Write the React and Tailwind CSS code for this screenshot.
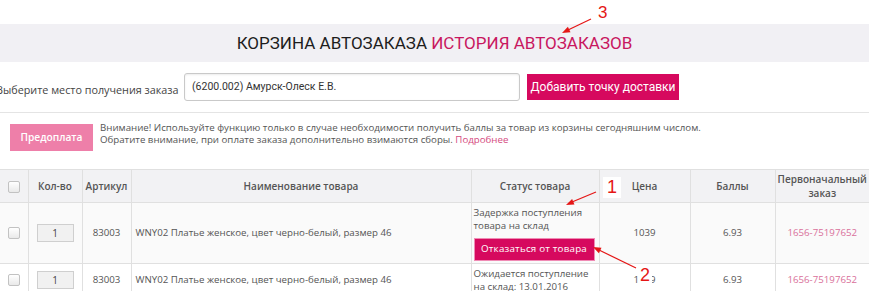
import React from 'react';

const narrow = { fontFamily: 'Roboto, "Liberation Sans", sans-serif' };

const Check = () => (
  <span className="inline-block w-[12px] h-[12px] rounded-[2px] border border-[#c2c2c2] bg-gradient-to-b from-white to-[#e9e9e9] align-middle" />
);

const Qty = () => (
  <div className="mx-auto w-[37px] h-[18px] border border-[#cfcfcf] bg-[#f1f1f1] text-center text-[10px] leading-[16px] text-[#444]">
    1
  </div>
);

const rows = [
  { status: ['Задержка поступления', 'товара на склад'], action: true },
  { status: ['Ожидается поступление', 'на склад: 13.01.2016'], action: false },
];

const App = () => {
  return (
    <div
      className="relative w-[869px] h-[291px] overflow-hidden bg-white text-[#555]"
      style={{ fontFamily: '"Open Sans", "DejaVu Sans", sans-serif' }}
    >
      <div className="h-[24px]" />
      <div className="h-[38px] bg-[#f1f0f4] flex items-center justify-center">
        <h1 className="text-[17px] leading-none text-[#1d1d1d] whitespace-nowrap" style={narrow}>
          КОРЗИНА АВТОЗАКАЗА <span className="text-[#c8175f]">ИСТОРИЯ АВТОЗАКАЗОВ</span>
        </h1>
      </div>

      <div className="h-[51px] flex items-center border-b border-[#e4e4e4]">
        <span className="-ml-[4px] mt-[7px] w-[184px] shrink-0 text-[10.8px] text-[#444] whitespace-nowrap">
          Выберите место получения заказа
        </span>
        <div
          className="ml-[4px] w-[336px] h-[28px] shrink-0 border border-[#c9c9c9] rounded-[3px] shadow-[inset_0_1px_2px_rgba(0,0,0,0.08)] flex items-center pl-[7px] text-[10.5px] text-[#333] whitespace-nowrap"
          style={narrow}
        >
          (6200.002) Амурск-Олеск Е.В.
        </div>
        <button
          className="ml-[7px] w-[152px] h-[26px] shrink-0 bg-[#d6095e] text-white text-[12px] whitespace-nowrap"
          style={narrow}
        >
          Добавить точку доставки
        </button>
      </div>

      <div className="h-[56px] flex items-start pl-[10px]">
        <button className="mt-[11px] w-[83px] h-[27px] shrink-0 bg-[#ee7fa9] text-white text-[10.2px] font-semibold">
          Предоплата
        </button>
        <div className="ml-[7px] mt-[9px] text-[9.7px] leading-[12px] text-[#555] whitespace-nowrap">
          <div>Внимание! Используйте функцию только в случае необходимости получить баллы за товар из корзины сегодняшним числом.</div>
          <div>
            Обратите внимание, при оплате заказа дополнительно взимаются сборы.{' '}
            <span className="text-[#d54a80]">Подробнее</span>
          </div>
        </div>
      </div>

      <table className="w-[869px] table-fixed border-collapse text-[9.7px]">
        <colgroup>
          <col className="w-[28px]" />
          <col className="w-[54px]" />
          <col className="w-[49px]" />
          <col className="w-[340px]" />
          <col className="w-[128px]" />
          <col className="w-[91px]" />
          <col className="w-[85px]" />
          <col className="w-[94px]" />
        </colgroup>
        <thead>
          <tr className="h-[33px] bg-[#f2f2f4] border-t border-b border-[#e0e0e0] text-[#555] text-[10px] leading-[14px]">
            <th className="border-r border-[#e0e0e0] font-semibold"><Check /></th>
            <th className="border-r border-[#e0e0e0] font-semibold">Кол-во</th>
            <th className="border-r border-[#e0e0e0] font-semibold">Артикул</th>
            <th className="border-r border-[#e0e0e0] font-semibold">Наименование товара</th>
            <th className="border-r border-[#e0e0e0] font-semibold">Статус товара</th>
            <th className="border-r border-[#e0e0e0] font-semibold">Цена</th>
            <th className="border-r border-[#e0e0e0] font-semibold">Баллы</th>
            <th className="font-semibold">Первоначальный<br />заказ</th>
          </tr>
        </thead>
        <tbody>
          {rows.map((r, i) => (
            <tr
              key={i}
              className={
                i === 0
                  ? 'h-[57px] bg-[#fafafa] border-b border-[#e0e0e0]'
                  : 'h-[33px] bg-white border-b border-[#e0e0e0]'
              }
            >
              <td className="border-r border-[#e0e0e0] text-center"><Check /></td>
              <td className="border-r border-[#e0e0e0]"><Qty /></td>
              <td className="border-r border-[#e0e0e0] text-center text-[#555]">83003</td>
              <td className="border-r border-[#e0e0e0] pl-[4px] text-[#555] whitespace-nowrap">
                WNY02 Платье женское, цвет черно-белый, размер 46
              </td>
              <td className="border-r border-[#e0e0e0] align-top pl-[2px] pt-[4px] leading-[12.5px] text-[#555]">
                <div>{r.status[0]}</div>
                <div>{r.status[1]}</div>
                {r.action && (
                  <button className="mt-[6px] mb-[2px] w-[121px] h-[23px] bg-[#d6095e] border border-[#f08ab4] text-white text-[9.8px] tracking-[0.2px]">
                    Отказаться от товара
                  </button>
                )}
              </td>
              <td className="border-r border-[#e0e0e0] text-center text-[#555]">1039</td>
              <td className="border-r border-[#e0e0e0] text-center text-[#555]">6.93</td>
              <td className="text-center text-[#d9709a]">1656-75197652</td>
            </tr>
          ))}
        </tbody>
      </table>

      {/* annotations on top of the screenshot */}
      <span className="absolute left-[598px] top-[3px] text-[17px] leading-[20px] text-[#e51616]" style={{ fontFamily: '"Liberation Sans", sans-serif' }}>
        3
      </span>
      <span className="absolute left-[603px] top-[177px] w-[18px] h-[21px] bg-white text-center text-[18px] leading-[21px] text-[#e51616]" style={{ fontFamily: '"Liberation Sans", sans-serif' }}>
        1
      </span>
      <span className="absolute left-[638px] top-[265px] w-[14px] h-[20px] bg-white text-center text-[18px] leading-[20px] text-[#e51616]" style={{ fontFamily: '"Liberation Sans", sans-serif' }}>
        2
      </span>
      <svg className="absolute inset-0 pointer-events-none" width="869" height="291">
        <g stroke="#e51616" strokeWidth="1.2" fill="#e51616">
          <line x1="591" y1="19" x2="568" y2="30" />
          <polygon points="562,33 570.5,32.2 567.9,26.8" stroke="none" />
          <line x1="596" y1="192" x2="572" y2="202" />
          <polygon points="566,205 574.5,204.6 572.1,199.1" stroke="none" />
          <line x1="636" y1="268" x2="599" y2="250" />
          <polygon points="593,247 601.5,247.8 598.9,253.2" stroke="none" />
        </g>
      </svg>
    </div>
  );
};

export default App;
